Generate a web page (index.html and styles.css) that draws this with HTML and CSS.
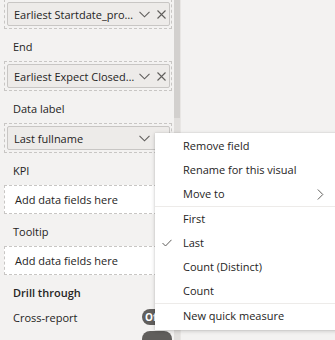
FILE: index.html
```html
<!DOCTYPE html>
<html lang="en">
<head>
  <meta charset="UTF-8" />
  <title>Field wells</title>
  <link rel="stylesheet" href="styles.css">
</head>
<body>
  <div class="layout">
    <aside class="pane">
      <div class="pane-scroll">
        <div class="well">
          <div class="pill">
            <span class="pill-name">Earliest Startdate_project</span>
            <svg class="chev" width="11" height="7" viewBox="0 0 11 7"><path d="M0.5 0.8 L5.5 5.8 L10.5 0.8" fill="none" stroke="#605e5c" stroke-width="1.1"/></svg>
            <svg class="close" width="9" height="9" viewBox="0 0 9 9"><path d="M0.5 0.5 L8.5 8.5 M8.5 0.5 L0.5 8.5" fill="none" stroke="#605e5c" stroke-width="1.1"/></svg>
          </div>
        </div>

        <div class="well-label">End</div>
        <div class="well">
          <div class="pill">
            <span class="pill-name">Earliest Expect Closed Date</span>
            <svg class="chev" width="11" height="7" viewBox="0 0 11 7"><path d="M0.5 0.8 L5.5 5.8 L10.5 0.8" fill="none" stroke="#605e5c" stroke-width="1.1"/></svg>
            <svg class="close" width="9" height="9" viewBox="0 0 9 9"><path d="M0.5 0.5 L8.5 8.5 M8.5 0.5 L0.5 8.5" fill="none" stroke="#605e5c" stroke-width="1.1"/></svg>
          </div>
        </div>

        <div class="well-label">Data label</div>
        <div class="well">
          <div class="pill">
            <span class="pill-name">Last fullname</span>
            <svg class="chev" width="11" height="7" viewBox="0 0 11 7"><path d="M0.5 0.8 L5.5 5.8 L10.5 0.8" fill="none" stroke="#605e5c" stroke-width="1.1"/></svg>
            <svg class="close" width="9" height="9" viewBox="0 0 9 9"><path d="M0.5 0.5 L8.5 8.5 M8.5 0.5 L0.5 8.5" fill="none" stroke="#605e5c" stroke-width="1.1"/></svg>
          </div>
        </div>

        <div class="well-label">KPI</div>
        <div class="well empty">Add data fields here</div>

        <div class="well-label">Tooltip</div>
        <div class="well empty">Add data fields here</div>

        <div class="section-title">Drill through</div>
        <div class="toggle-row">
          <span>Cross-report</span>
          <span class="toggle">Off</span>
        </div>
        <div class="toggle-row">
          <span></span>
          <span class="toggle"></span>
        </div>
      </div>
    </aside>
    <div class="scrollbar"><div class="thumb"></div></div>
    <div class="canvas"></div>
  </div>

  <ul class="menu">
    <li>Remove field</li>
    <li>Rename for this visual</li>
    <li class="has-sub">Move to
      <svg width="7" height="11" viewBox="0 0 7 11"><path d="M0.8 0.5 L5.8 5.5 L0.8 10.5" fill="none" stroke="#605e5c" stroke-width="1"/></svg>
    </li>
    <li class="sep"></li>
    <li>First</li>
    <li class="checked">
      <svg class="check" width="10" height="8" viewBox="0 0 10 8"><path d="M0.5 4 L3.5 7 L9.5 0.8" fill="none" stroke="#605e5c" stroke-width="1"/></svg>
      Last
    </li>
    <li>Count (Distinct)</li>
    <li>Count</li>
    <li class="sep"></li>
    <li>New quick measure</li>
  </ul>
</body>
</html>
```

FILE: styles.css
```css
* {
  margin: 0;
  padding: 0;
  box-sizing: border-box;
}

body {
  font-family: 'Open Sans', 'Noto Sans', sans-serif;
  font-size: 11px;
  color: #252423;
  background-color: #f3f2f1;
  width: 335px;
  height: 340px;
  overflow: hidden;
  position: relative;
}

.layout {
  display: flex;
  height: 340px;
}

.pane {
  width: 174px;
  flex-shrink: 0;
  overflow: hidden;
}

/* content is scrolled a little past the first well */
.pane-scroll {
  margin-top: -1px;
}

.well {
  margin: 0 2px 0 4px;
  border: 1px dashed #c8c6c4;
  padding: 2px 1px 2px 2px;
}

.pill {
  display: flex;
  align-items: center;
  height: 24px;
  padding: 0 3px 0 6px;
  background-color: #edebe9;
  border: 1px solid #c8c6c4;
  border-radius: 2px;
}

.pill-name {
  flex: 1;
  white-space: nowrap;
  overflow: hidden;
  text-overflow: ellipsis;
}

.chev {
  margin-left: 4px;
  flex-shrink: 0;
}

.close {
  margin-left: 7px;
  flex-shrink: 0;
}

.well.empty {
  background-color: #fff;
  height: 29px;
  line-height: 27px;
  padding: 0 0 0 10px;
}

.well-label {
  padding: 10px 0 6px 13px;
  line-height: 16px;
}

.section-title {
  padding: 10px 0 6px 13px;
  line-height: 16px;
  font-weight: 600;
}

.toggle-row {
  display: flex;
  justify-content: space-between;
  align-items: center;
  height: 20px;
  padding: 0 0 0 13px;
}

.toggle-row + .toggle-row {
  margin-top: 2px;
}

.toggle {
  background-color: #605e5c;
  color: #fff;
  font-weight: 700;
  border-radius: 8px;
  height: 16px;
  line-height: 16px;
  width: 30px;
  padding-left: 3px;
  margin-right: 2px;
  font-size: 10px;
  overflow: hidden;
}

.scrollbar {
  width: 7px;
  flex-shrink: 0;
  background-color: #e1dfdd;
  border-right: 1px solid #e8e6e4;
}

.thumb {
  height: 118px;
  background-color: #d2d0ce;
}

.canvas {
  flex: 1;
  background-color: #f3f2f1;
}

.menu {
  position: absolute;
  left: 155px;
  top: 133px;
  width: 190px;
  background-color: #fff;
  list-style: none;
  padding: 1px 0 2px;
  box-shadow: 0 1px 4px rgba(0, 0, 0, 0.2), 0 0 1px rgba(0, 0, 0, 0.15);
}

.menu li {
  position: relative;
  height: 24px;
  line-height: 24px;
  padding-left: 28px;
  white-space: nowrap;
}

.menu li.sep {
  height: 1px;
  background-color: #edebe9;
  padding: 0;
}

.menu li.has-sub svg {
  position: absolute;
  left: 162px;
  top: 7px;
}

.menu .check {
  position: absolute;
  left: 7px;
  top: 8px;
}
```
